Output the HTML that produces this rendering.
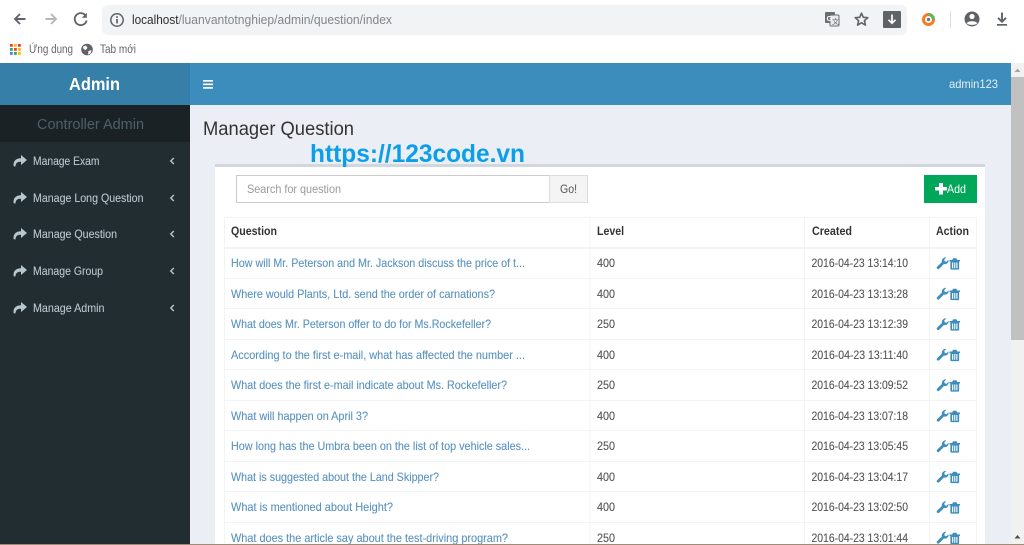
<!DOCTYPE html>
<html lang="vi">
<head>
<meta charset="utf-8">
<title>Manager Question</title>
<style>
html,body{margin:0;padding:0;width:1024px;height:545px;overflow:hidden;background:#fff}
svg{display:block;filter:blur(.3px)}
text{font-family:"Liberation Sans","Noto Sans CJK SC",sans-serif;white-space:pre}
.lnk{fill:#5a93bf;font-size:12px;stroke:#5a93bf;stroke-width:.12}
.cell{fill:#555;font-size:12px;stroke:#555;stroke-width:.12}
.th{fill:#333;font-size:12px;font-weight:bold}
.menu{fill:#b8c7ce;font-size:12px;stroke:#b8c7ce;stroke-width:.1}
.line{stroke:#f2f3f4;stroke-width:1}
</style>
</head>
<body>
<svg width="1024" height="545" viewBox="0 0 1024 545" xmlns="http://www.w3.org/2000/svg">
<defs>
<g id="share"><path d="M0 10.500C-.2 5.500 3 3.300 7.500 3.300V0L13.500 5 7.500 10V6.700C4.500 6.700 2.300 7.300 1.900 11.500 .8 11.500 .1 11.200 0 10.500Z" fill="#b8c7ce"/></g>
<g id="chev"><path d="M3.800 0 .8 3 3.800 6" fill="none" stroke="#b8c7ce" stroke-width="1.400"/></g>
<g id="act"><g transform="scale(1.120)">
<path d="M.6 8.600 5 4.300C4.500 2.300 6 .1 8.400.2L6.700 2 7.200 3.700 8.900 4.200 10.600 2.500C10.800 4.900 8.600 6.400 6.600 5.800L2.200 10.200C1.200 11 -.2 9.600.6 8.600Z" fill="#3c8dbc" stroke="#3c8dbc" stroke-width=".4"/>
<path d="M11.600 2.400H21V3.700H20.200V10.200C20.200 10.700 19.800 11 19.400 11H13.200C12.800 11 12.400 10.700 12.400 10.200V3.700H11.600ZM14 2.400 14.800 .8H17.800L18.600 2.400ZM13.900 4.600V9.800H14.900V4.600ZM15.800 4.600V9.800H16.800V4.600ZM17.700 4.600V9.800H18.700V4.600Z" fill="#3c8dbc" fill-rule="evenodd"/>
</g></g>
</defs>

<!-- Browser chrome -->
<rect width="1024" height="63" fill="#fff"/>
<path d="M25.500 19H15.500M20 14 15 19 20 24" fill="none" stroke="#5f6368" stroke-width="1.900"/>
<path d="M45.500 19H55.500M51 14 56 19 51 24" fill="none" stroke="#b5b8bb" stroke-width="1.900"/>
<path d="M85.600 15.600A6 6 0 1 0 86.600 20.500" fill="none" stroke="#5f6368" stroke-width="1.800"/>
<path d="M86.800 12.800V17.800H81.800Z" fill="#5f6368"/>
<rect x="102" y="5" width="805" height="30" rx="6" fill="#f1f3f4"/>
<circle cx="117" cy="20" r="6.200" fill="none" stroke="#5f6368" stroke-width="1.500"/>
<rect x="116.200" y="19" width="1.700" height="4.400" fill="#5f6368"/>
<rect x="116.200" y="16.200" width="1.700" height="1.700" fill="#5f6368"/>
<text x="132" y="24" font-size="13" fill="#2a2c2f" textLength="46.500" lengthAdjust="spacingAndGlyphs">localhost</text>
<text x="178.500" y="24" font-size="13" fill="#80868b" textLength="213.500" lengthAdjust="spacingAndGlyphs">/luanvantotnghiep/admin/question/index</text>
<!-- translate -->
<rect x="825" y="12" width="10" height="11" rx="1" fill="#6a6e73"/>
<rect x="830" y="15" width="9" height="11" rx="1" fill="#e8eaec" stroke="#6a6e73"/>
<text x="826.500" y="21" font-size="7.500" font-weight="bold" fill="#fff">G</text>
<text x="832" y="24" font-size="7" fill="#5f6368">文</text>
<!-- star -->
<path d="M861.500 13.200 863.300 17.300 867.800 17.700 864.400 20.700 865.400 25.100 861.500 22.800 857.600 25.100 858.600 20.700 855.200 17.700 859.700 17.300Z" fill="none" stroke="#5f6368" stroke-width="1.600" stroke-linejoin="round"/>
<!-- download box -->
<rect x="883" y="11" width="18" height="17" rx="1" fill="#5f6368"/>
<path d="M892 14.500V23M888.500 19.800 892 23.200 895.500 19.800" fill="none" stroke="#fff" stroke-width="1.700"/>
<!-- ring extension -->
<circle cx="928.500" cy="19.500" r="5" fill="none" stroke="#f47b20" stroke-width="3"/>
<path d="M928.500 14.500A5 5 0 0 1 933.500 19.500" fill="none" stroke="#5cb85c" stroke-width="3"/>
<circle cx="928.500" cy="19.500" r="1.700" fill="#777"/>
<rect x="950" y="11" width="1" height="17" fill="#dadce0"/>
<!-- profile -->
<circle cx="972" cy="19" r="7.500" fill="#5f6368"/>
<circle cx="972" cy="16.500" r="2.600" fill="#fff"/>
<path d="M966.800 23.200C968 20.600 976 20.600 977.200 23.200 975.800 25.400 968.200 25.400 966.800 23.200Z" fill="#fff"/>
<!-- download -->
<path d="M1002 12.500V21.500M998 17.800 1002 21.800 1006 17.800" fill="none" stroke="#5f6368" stroke-width="1.900"/>
<rect x="997" y="24" width="10" height="1.700" fill="#5f6368"/>

<!-- Bookmarks -->
<g>
<rect x="10" y="44" width="2.800" height="2.800" fill="#ea4335"/><rect x="14" y="44" width="2.800" height="2.800" fill="#fbbc05"/><rect x="18" y="44" width="2.800" height="2.800" fill="#ea4335"/>
<rect x="10" y="48" width="2.800" height="2.800" fill="#34a853"/><rect x="14" y="48" width="2.800" height="2.800" fill="#ea4335"/><rect x="18" y="48" width="2.800" height="2.800" fill="#fbbc05"/>
<rect x="10" y="52" width="2.800" height="2.800" fill="#4285f4"/><rect x="14" y="52" width="2.800" height="2.800" fill="#34a853"/><rect x="18" y="52" width="2.800" height="2.800" fill="#fbbc05"/>
</g>
<text x="29" y="53" font-size="11.500" fill="#666" textLength="44" lengthAdjust="spacingAndGlyphs">Ứng dụng</text>
<circle cx="87" cy="49.500" r="5.800" fill="#5f6368"/>
<path d="M83 46.500 86 45.500 87.500 48 85.500 50 83.500 49ZM88.500 51 91.500 50 90.500 53.500 88 54.500Z" fill="#fff"/>
<text x="100" y="53" font-size="11.500" fill="#666" textLength="36" lengthAdjust="spacingAndGlyphs">Tab mới</text>

<!-- Content background -->
<rect x="190" y="105" width="821" height="440" fill="#ebeef4"/>

<!-- Header -->
<rect x="0" y="63" width="190" height="42" fill="#367fa9"/>
<rect x="190" y="63" width="821" height="42" fill="#3c8dbc"/>
<text x="69" y="90" font-size="17.500" font-weight="bold" fill="#fff" textLength="51" lengthAdjust="spacingAndGlyphs">Admin</text>
<rect x="203" y="80" width="10" height="1.700" fill="#fff"/><rect x="203" y="83.500" width="10" height="1.700" fill="#fff"/><rect x="203" y="87" width="10" height="1.700" fill="#fff"/>
<text x="949" y="88" font-size="12" fill="#e4eff6" textLength="49" lengthAdjust="spacingAndGlyphs">admin123</text>

<!-- Sidebar -->
<rect x="0" y="105" width="190" height="440" fill="#222d32"/>
<rect x="0" y="105" width="190" height="37" fill="#1a2226"/>
<text x="37" y="129" font-size="14.500" fill="#4b5f6b" textLength="107" lengthAdjust="spacingAndGlyphs">Controller Admin</text>

<use href="#share" x="13.500" y="155"/><text class="menu" x="33" y="165" textLength="66.500" lengthAdjust="spacingAndGlyphs">Manage Exam</text><use href="#chev" x="170" y="158"/>
<use href="#share" x="13.500" y="192"/><text class="menu" x="33" y="202" textLength="110.500" lengthAdjust="spacingAndGlyphs">Manage Long Question</text><use href="#chev" x="170" y="195"/>
<use href="#share" x="13.500" y="228"/><text class="menu" x="33" y="238" textLength="84" lengthAdjust="spacingAndGlyphs">Manage Question</text><use href="#chev" x="170" y="231"/>
<use href="#share" x="13.500" y="265"/><text class="menu" x="33" y="275" textLength="70" lengthAdjust="spacingAndGlyphs">Manage Group</text><use href="#chev" x="170" y="268"/>
<use href="#share" x="13.500" y="302"/><text class="menu" x="33" y="312" textLength="71.500" lengthAdjust="spacingAndGlyphs">Manage Admin</text><use href="#chev" x="170" y="305"/>

<!-- Page title -->
<text x="203" y="135" font-size="19.500" fill="#333" textLength="151" lengthAdjust="spacingAndGlyphs">Manager Question</text>

<!-- Card -->
<rect x="215" y="164" width="770" height="381" fill="#fff"/>
<rect x="215" y="164" width="770" height="3" fill="#d2d6de"/>
<text x="310" y="162" font-size="25" font-weight="bold" fill="#0c9fe9" textLength="215" lengthAdjust="spacingAndGlyphs">https://123code.vn</text>

<!-- Search -->
<rect x="236.500" y="175.500" width="351" height="27" fill="#fff" stroke="#ccc"/>
<rect x="549.500" y="175.500" width="38" height="27" fill="#f4f4f4" stroke="#ddd"/>
<text x="247" y="193" font-size="12" fill="#999" textLength="94" lengthAdjust="spacingAndGlyphs">Search for question</text>
<text x="560" y="193" font-size="12" fill="#555" textLength="17" lengthAdjust="spacingAndGlyphs">Go!</text>

<!-- Add -->
<rect x="924" y="175" width="53" height="28" fill="#00a65a"/>
<path d="M935 187H939V183H943V187H947V190.500H943V194.500H939V190.500H935Z" fill="#fff"/>
<text x="947" y="193" font-size="12" fill="#fff" textLength="19" lengthAdjust="spacingAndGlyphs">Add</text>

<!-- Table lines -->
<path class="line" d="M224.500 217V545M590 217V545M804.500 217V545M929.500 217V545M976.500 217V545M224 217.500H977"/>
<rect x="224" y="247" width="753" height="2" fill="#f2f3f4"/>
<path class="line" d="M224 278.500H977M224 308.500H977M224 339.500H977M224 369.500H977M224 400.500H977M224 430.500H977M224 461.500H977M224 491.500H977M224 522.500H977"/>

<!-- Table head -->
<text class="th" x="231" y="235" textLength="46" lengthAdjust="spacingAndGlyphs">Question</text>
<text class="th" x="597" y="235" textLength="27" lengthAdjust="spacingAndGlyphs">Level</text>
<text class="th" x="812" y="235" textLength="40" lengthAdjust="spacingAndGlyphs">Created</text>
<text class="th" x="936" y="235" textLength="33" lengthAdjust="spacingAndGlyphs">Action</text>

<!-- Rows -->
<text class="lnk" x="231" y="267" textLength="294" lengthAdjust="spacingAndGlyphs">How will Mr. Peterson and Mr. Jackson discuss the price of t...</text>
<text class="cell" x="597" y="267" textLength="18" lengthAdjust="spacingAndGlyphs">400</text>
<text class="cell" x="811.500" y="267" textLength="96.500" lengthAdjust="spacingAndGlyphs">2016-04-23 13:14:10</text>
<use href="#act" x="936.500" y="257.300"/>

<text class="lnk" x="231" y="298" textLength="264" lengthAdjust="spacingAndGlyphs">Where would Plants, Ltd. send the order of carnations?</text>
<text class="cell" x="597" y="298" textLength="18" lengthAdjust="spacingAndGlyphs">400</text>
<text class="cell" x="811.500" y="298" textLength="96.500" lengthAdjust="spacingAndGlyphs">2016-04-23 13:13:28</text>
<use href="#act" x="936.500" y="287.800"/>

<text class="lnk" x="231" y="328" textLength="260" lengthAdjust="spacingAndGlyphs">What does Mr. Peterson offer to do for Ms.Rockefeller?</text>
<text class="cell" x="597" y="328" textLength="18" lengthAdjust="spacingAndGlyphs">250</text>
<text class="cell" x="811.500" y="328" textLength="96.500" lengthAdjust="spacingAndGlyphs">2016-04-23 13:12:39</text>
<use href="#act" x="936.500" y="318.300"/>

<text class="lnk" x="231" y="359" textLength="294" lengthAdjust="spacingAndGlyphs">According to the first e-mail, what has affected the number ...</text>
<text class="cell" x="597" y="359" textLength="18" lengthAdjust="spacingAndGlyphs">400</text>
<text class="cell" x="811.500" y="359" textLength="96.500" lengthAdjust="spacingAndGlyphs">2016-04-23 13:11:40</text>
<use href="#act" x="936.500" y="348.800"/>

<text class="lnk" x="231" y="389" textLength="276" lengthAdjust="spacingAndGlyphs">What does the first e-mail indicate about Ms. Rockefeller?</text>
<text class="cell" x="597" y="389" textLength="18" lengthAdjust="spacingAndGlyphs">250</text>
<text class="cell" x="811.500" y="389" textLength="96.500" lengthAdjust="spacingAndGlyphs">2016-04-23 13:09:52</text>
<use href="#act" x="936.500" y="379.300"/>

<text class="lnk" x="231" y="420" textLength="137" lengthAdjust="spacingAndGlyphs">What will happen on April 3?</text>
<text class="cell" x="597" y="420" textLength="18" lengthAdjust="spacingAndGlyphs">400</text>
<text class="cell" x="811.500" y="420" textLength="96.500" lengthAdjust="spacingAndGlyphs">2016-04-23 13:07:18</text>
<use href="#act" x="936.500" y="409.800"/>

<text class="lnk" x="231" y="450" textLength="299" lengthAdjust="spacingAndGlyphs">How long has the Umbra been on the list of top vehicle sales...</text>
<text class="cell" x="597" y="450" textLength="18" lengthAdjust="spacingAndGlyphs">250</text>
<text class="cell" x="811.500" y="450" textLength="96.500" lengthAdjust="spacingAndGlyphs">2016-04-23 13:05:45</text>
<use href="#act" x="936.500" y="440.300"/>

<text class="lnk" x="231" y="481" textLength="208" lengthAdjust="spacingAndGlyphs">What is suggested about the Land Skipper?</text>
<text class="cell" x="597" y="481" textLength="18" lengthAdjust="spacingAndGlyphs">400</text>
<text class="cell" x="811.500" y="481" textLength="96.500" lengthAdjust="spacingAndGlyphs">2016-04-23 13:04:17</text>
<use href="#act" x="936.500" y="470.800"/>

<text class="lnk" x="231" y="511" textLength="162" lengthAdjust="spacingAndGlyphs">What is mentioned about Height?</text>
<text class="cell" x="597" y="511" textLength="18" lengthAdjust="spacingAndGlyphs">400</text>
<text class="cell" x="811.500" y="511" textLength="96.500" lengthAdjust="spacingAndGlyphs">2016-04-23 13:02:50</text>
<use href="#act" x="936.500" y="501.300"/>

<text class="lnk" x="231" y="542" textLength="277" lengthAdjust="spacingAndGlyphs">What does the article say about the test-driving program?</text>
<text class="cell" x="597" y="542" textLength="18" lengthAdjust="spacingAndGlyphs">250</text>
<text class="cell" x="811.500" y="542" textLength="96.500" lengthAdjust="spacingAndGlyphs">2016-04-23 13:01:44</text>
<use href="#act" x="936.500" y="531.800"/>

<!-- Scrollbar -->
<rect x="1011" y="63" width="13" height="482" fill="#f1f1f1"/>
<rect x="1011" y="77" width="13" height="263" fill="#c1c1c1"/>
<path d="M1014.500 72 1017.500 68.500 1020.500 72Z" fill="#a3a3a3"/>
<path d="M1014.500 535.500 1017.500 539 1020.500 535.500Z" transform="rotate(180 1017.500 537)" fill="#505050"/>

<!-- Bottom edge -->
<rect x="0" y="544" width="1024" height="1" fill="#a08b76"/>
</svg>
</body>
</html>
